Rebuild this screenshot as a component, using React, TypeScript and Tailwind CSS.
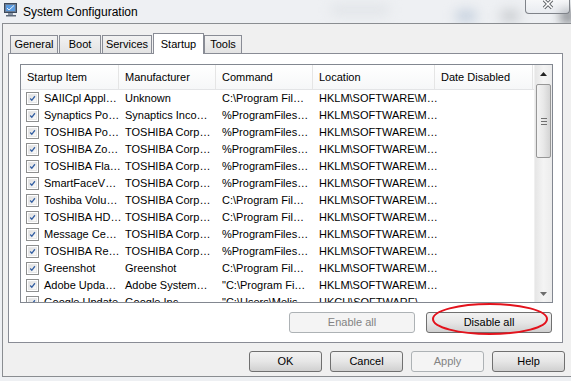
import React from "react";

const rows = [
  ["SAIICpl Appl…", "Unknown", "C:\\Program Fil…", "HKLM\\SOFTWARE\\M…"],
  ["Synaptics Po…", "Synaptics Inco…", "%ProgramFiles…", "HKLM\\SOFTWARE\\M…"],
  ["TOSHIBA Po…", "TOSHIBA Corp…", "%ProgramFiles…", "HKLM\\SOFTWARE\\M…"],
  ["TOSHIBA Zo…", "TOSHIBA Corp…", "%ProgramFiles…", "HKLM\\SOFTWARE\\M…"],
  ["TOSHIBA Fla…", "TOSHIBA Corp…", "%ProgramFiles…", "HKLM\\SOFTWARE\\M…"],
  ["SmartFaceV…", "TOSHIBA Corp…", "%ProgramFiles…", "HKLM\\SOFTWARE\\M…"],
  ["Toshiba Volu…", "TOSHIBA Corp…", "C:\\Program Fil…", "HKLM\\SOFTWARE\\M…"],
  ["TOSHIBA HD…", "TOSHIBA Corp…", "C:\\Program Fil…", "HKLM\\SOFTWARE\\M…"],
  ["Message Ce…", "TOSHIBA Corp…", "%ProgramFiles…", "HKLM\\SOFTWARE\\M…"],
  ["TOSHIBA Re…", "TOSHIBA Corp…", "%ProgramFiles…", "HKLM\\SOFTWARE\\M…"],
  ["Greenshot", "Greenshot", "C:\\Program Fil…", "HKLM\\SOFTWARE\\M…"],
  ["Adobe Upda…", "Adobe System…", "\"C:\\Program Fi…", "HKLM\\SOFTWARE\\M…"],
  ["Google Update", "Google Inc.", "\"C:\\Users\\Melis", "HKCU\\SOFTWARE\\…"],
];

const tabs = [
  { label: "General", w: "w-[48px]" },
  { label: "Boot", w: "w-[42px]" },
  { label: "Services", w: "w-[50px]" },
  { label: "Startup", w: "w-[51px]", active: true },
  { label: "Tools", w: "w-[38px]" },
];

const Check = () => (
  <div className="w-[13px] h-[13px] shrink-0 border border-[#8e8f8f] bg-white p-px">
    <div className="w-full h-full bg-gradient-to-br from-[#dedede] to-[#fbfbfb] border border-[#e8e8e8]">
      <svg viewBox="0 0 9 9" className="w-full h-full">
        <path d="M1.5 4.6 L3.6 6.8 L7.6 1.6" fill="none" stroke="#3560a3" strokeWidth="1.7" />
      </svg>
    </div>
  </div>
);

const Btn = ({ label, w, disabled }: { label: string; w: string; disabled?: boolean }) => (
  <div
    className={`${w} h-[21px] rounded-[3px] border flex items-center justify-center text-[11px] ${
      disabled
        ? "border-[#adb2b5] bg-[#f4f4f4] text-[#838383]"
        : "border-[#707070] bg-gradient-to-b from-[#f2f2f2] via-[#e6e6e6] to-[#d0d0d0] text-black"
    }`}
  >
    {label}
  </div>
);

export default function App() {
  return (
    <div className="relative w-[571px] h-[381px] overflow-hidden bg-[#eef0f3] font-['Liberation_Sans',sans-serif] text-[11px] text-black">
      {/* glass blur behind the title bar */}
      <div className="absolute left-[330px] top-[4px] w-[60px] h-[12px] rounded-full bg-[#e2e5e9] blur-[6px]" />
      <div className="absolute left-[455px] top-[10px] w-[22px] h-[12px] rounded-full bg-[#c5d0de] blur-[6px]" />
      <div className="absolute left-[500px] top-[10px] w-[20px] h-[12px] rounded-full bg-[#c9ccd0] blur-[6px]" />
      <div className="absolute left-[560px] top-[8px] w-[16px] h-[16px] bg-[#9a9da1] blur-[5px]" />

      <div className="relative h-[23px] flex items-start">
        <svg viewBox="0 0 14 14" className="w-[14px] h-[14px] ml-[4px] mt-[3px]">
          <rect x="0.5" y="0.5" width="12" height="9" fill="#6b7c93" stroke="#3d4a5c" />
          <rect x="2" y="2" width="9" height="6" fill="#5a9be0" />
          <path d="M3 5 L5 7 L10 2.5" fill="none" stroke="#e9f3ff" strokeWidth="1" />
          <rect x="4" y="10" width="5" height="2" fill="#8895a6" />
          <rect x="2" y="12" width="10" height="1.5" fill="#5d6878" />
        </svg>
        <span className="ml-[5px] mt-[3px] text-[12px] text-black">System Configuration</span>
        <div className="ml-auto mr-px w-[45px] h-[14px] rounded-b-[4px] border border-t-0 border-[#7f8389] bg-gradient-to-b from-[#ffffff80] to-[#e4e8ee80] flex justify-center">
          <svg viewBox="0 0 14 10" className="w-[14px] h-[10px]">
            <path d="M3 0 L11 8 M11 0 L3 8" stroke="#5d6166" strokeWidth="3.4" />
            <path d="M3 0 L11 8 M11 0 L3 8" stroke="#ffffff" strokeWidth="1.6" />
          </svg>
        </div>
      </div>

      <div className="relative ml-[2px] h-[354px] border-l border-t border-b border-[#8a8d91] bg-[#f0f0f0] flex flex-col">
        <div className="flex items-end h-[29px] pl-[7px]">
          {tabs.map((t) =>
            t.active ? (
              <div
                key={t.label}
                className={`${t.w} h-[21px] -mb-px z-10 border border-b-0 border-[#898c95] bg-white flex items-center justify-center`}
              >
                {t.label}
              </div>
            ) : (
              <div
                key={t.label}
                className={`${t.w} h-[18px] mr-px border border-b-0 border-[#898c95] bg-gradient-to-b from-[#f2f2f2] to-[#e3e3e3] flex items-center justify-center`}
              >
                {t.label}
              </div>
            )
          )}
        </div>

        <div className="ml-[5px] w-[555px] border border-[#898c95] bg-white pt-[10px] pl-[11px] pb-[9px]">
          <div className="w-[533px] h-[239px] border border-[#828790] flex">
            <div className="flex-1 overflow-hidden">
              <div className="h-[25px] flex border-b border-[#e3e4e6] bg-gradient-to-b from-white to-[#f6f7f8]">
                <div className="w-[98px] pl-[6px] border-r border-[#e5e5e5] flex items-center">Startup Item</div>
                <div className="w-[97px] pl-[6px] border-r border-[#e5e5e5] flex items-center">Manufacturer</div>
                <div className="w-[97px] pl-[6px] border-r border-[#e5e5e5] flex items-center">Command</div>
                <div className="w-[122px] pl-[6px] border-r border-[#e5e5e5] flex items-center">Location</div>
                <div className="w-[98px] pl-[6px] border-r border-[#e5e5e5] flex items-center">Date Disabled</div>
              </div>
              {rows.map((r, i) => (
                <div key={i} className="h-[17px] flex items-center whitespace-nowrap">
                  <div className="w-[98px] shrink-0 pl-[5px] flex items-center gap-[5px]">
                    <Check />
                    <span>{r[0]}</span>
                  </div>
                  <div className="w-[97px] shrink-0 pl-[6px]">{r[1]}</div>
                  <div className="w-[97px] shrink-0 pl-[6px]">{r[2]}</div>
                  <div className="w-[122px] shrink-0 pl-[6px]">{r[3]}</div>
                </div>
              ))}
            </div>
            <div className="w-[18px] flex flex-col bg-gradient-to-r from-[#e6e6e6] via-[#f4f4f4] to-[#ececec] border-l border-[#f0f0f0]">
              <div className="h-[17px] flex items-center justify-center">
                <svg viewBox="0 0 7 4" className="w-[7px] h-[4px]">
                  <path d="M0 4 L3.5 0 L7 4 Z" fill="#222" />
                </svg>
              </div>
              <div className="mx-px mt-[2px] h-[74px] rounded-[2px] border border-[#979797] bg-gradient-to-r from-[#f4f4f4] via-[#e8e8e8] to-[#d4d4d4] flex flex-col items-center justify-center gap-[2px]">
                <div className="w-[6px] h-px bg-[#707070]" />
                <div className="w-[6px] h-px bg-[#707070]" />
                <div className="w-[6px] h-px bg-[#707070]" />
              </div>
              <div className="flex-1" />
              <div className="h-[17px] flex items-center justify-center">
                <svg viewBox="0 0 7 4" className="w-[7px] h-[4px]">
                  <path d="M0 0 L3.5 4 L7 0 Z" fill="#6d6d6d" />
                </svg>
              </div>
            </div>
          </div>
          <div className="w-[533px] mt-[9px] flex justify-end gap-[11px] pr-px">
            <Btn label="Enable all" w="w-[126px]" disabled />
            <div className="relative">
              <Btn label="Disable all" w="w-[126px]" />
              <svg className="absolute left-[5px] top-[-10px] w-[118px] h-[34px] overflow-visible" viewBox="0 0 118 34">
                <ellipse cx="59" cy="17" rx="57" ry="15" fill="none" stroke="#e3121c" strokeWidth="2" />
              </svg>
            </div>
          </div>
        </div>

        <div className="mt-[8px] flex justify-end gap-[8px] pr-[6px]">
          <Btn label="OK" w="w-[73px]" />
          <Btn label="Cancel" w="w-[73px]" />
          <Btn label="Apply" w="w-[73px]" disabled />
          <Btn label="Help" w="w-[73px]" />
        </div>
      </div>
    </div>
  );
}
